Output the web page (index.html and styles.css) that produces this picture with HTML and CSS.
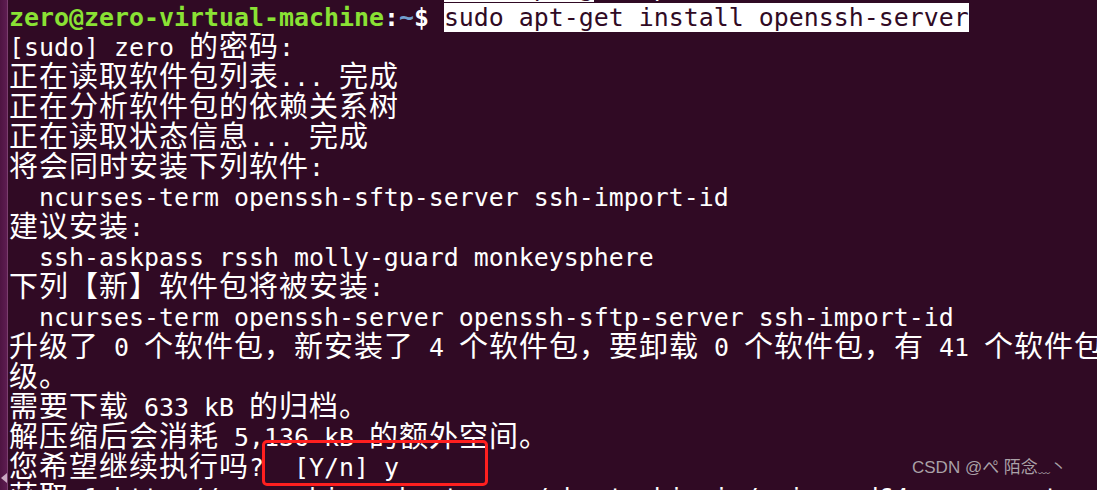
FILE: index.html
```html
<!DOCTYPE html>
<html lang="zh-CN">
<head>
<meta charset="utf-8">
<title>Terminal</title>
<link rel="stylesheet" href="styles.css">
</head>
<body>
<div class="window">
  <div class="strip"><span class="arrow"></span></div>
  <div class="term">
    <div class="scrollback"><div class="line"><span class="pg">zero@zero-virtual-machine</span><span class="pw">:</span><span class="pb">~</span><span class="pw">$</span> <span class="sel">sudo apt-g</span>et update</div></div>
    <div class="line"><span class="pg">zero@zero-virtual-machine</span><span class="pw">:</span><span class="pb">~</span><span class="pw">$</span> <span class="sel">sudo apt-get install openssh-server</span></div>
    <div class="line">[sudo] zero <span class="c">的密码</span>:</div>
    <div class="line"><span class="c">正在读取软件包列表</span>... <span class="c">完成</span></div>
    <div class="line"><span class="c">正在分析软件包的依赖关系树</span></div>
    <div class="line"><span class="c">正在读取状态信息</span>... <span class="c">完成</span></div>
    <div class="line"><span class="c">将会同时安装下列软件</span>:</div>
    <div class="line">  ncurses-term openssh-sftp-server ssh-import-id</div>
    <div class="line"><span class="c">建议安装</span>:</div>
    <div class="line">  ssh-askpass rssh molly-guard monkeysphere</div>
    <div class="line"><span class="c">下列【新】软件包将被安装</span>:</div>
    <div class="line">  ncurses-term openssh-server openssh-sftp-server ssh-import-id</div>
    <div class="line"><span class="c">升级了</span> 0 <span class="c">个软件包，新安装了</span> 4 <span class="c">个软件包，要卸载</span> 0 <span class="c">个软件包，有</span> 41 <span class="c">个软件包未被升</span></div>
    <div class="line"><span class="c">级。</span></div>
    <div class="line"><span class="c">需要下载</span> 633 kB <span class="c">的归档。</span></div>
    <div class="line"><span class="c">解压缩后会消耗</span> 5,136 kB <span class="c">的额外空间。</span></div>
    <div class="line"><span class="c">您希望继续执行吗</span>?  [Y/n] y</div>
    <div class="line"><span class="c">获取</span>:1 http://cn.archive.ubuntu.com/ubuntu bionic/main amd64 ncurses-term all 6.1-1ubuntu1 [248 kB]</div>
  </div>
  <div class="mark"></div>
  <div class="watermark">CSDN @ぺ 陌念<span class="wave">﹏</span>丶</div>
</div>
</body>
</html>
```
FILE: styles.css
```css
html, body {
  margin: 0;
  padding: 0;
  background: #300a24;
}
.window {
  position: relative;
  width: 1097px;
  height: 490px;
  overflow: hidden;
  display: flex;
  background: #300a24;
}
.strip {
  width: 7px;
  flex: none;
  background: linear-gradient(to right, #4e1442, #5e1d52);
  border-right: 1px solid #7a3f6e;
  display: flex;
  flex-direction: column;
  justify-content: flex-end;
  align-items: center;
  padding-bottom: 7px;
  box-sizing: content-box;
}
.arrow {
  width: 0;
  height: 0;
  border-top: 5px solid transparent;
  border-bottom: 5px solid transparent;
  border-right: 6px solid #c9a9c2;
}
.term {
  flex: 1;
  min-width: 0;
  padding-left: 1px;
  overflow: hidden;
  font-family: "DejaVu Sans Mono", "Noto Sans CJK SC", monospace;
  font-size: 24.92px;
  line-height: 30px;
  color: #ffffff;
}
.scrollback {
  height: 3px;
  overflow: hidden;
  display: flex;
  flex-direction: column;
  justify-content: flex-end;
}
.line {
  height: 30px;
  flex: none;
  white-space: pre;
}
.c {
  font-family: "Noto Sans CJK SC", "Noto Sans CJK JP", sans-serif;
  font-size: 29px;
  letter-spacing: 1px;
  line-height: 0;
  position: relative;
  top: 1px;
}
.pg {
  color: #8ae234;
  font-weight: bold;
}
.pb {
  color: #729fcf;
  font-weight: bold;
}
.pw {
  color: #ffffff;
  font-weight: bold;
}
.sel {
  background: #ffffff;
  color: #300a24;
}
.mark {
  position: absolute;
  left: 262px;
  top: 440px;
  width: 226px;
  height: 46px;
  box-sizing: border-box;
  border: 3.5px solid #ff1f1f;
  border-radius: 5px;
}
.watermark {
  position: absolute;
  left: 912px;
  top: 457px;
  font-family: "Liberation Sans", "Noto Sans CJK SC", sans-serif;
  font-size: 17px;
  line-height: 22px;
  color: rgba(205, 205, 205, 0.78);
  white-space: nowrap;
}
.wave {
  font-size: 12px;
}
```
